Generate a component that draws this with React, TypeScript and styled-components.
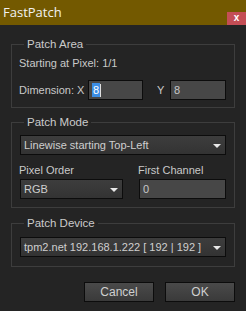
import React from "react";
import styled, { createGlobalStyle } from "styled-components";

const Global = createGlobalStyle`
  html, body {
    margin: 0;
    padding: 0;
    background: #242424;
  }
  body {
    font-family: "Liberation Sans", Arial, sans-serif;
    font-size: 11px;
    color: #c9c9c9;
  }
`;

const Window = styled.div`
  width: 246px;
  height: 311px;
  background: #242424;
  display: flex;
  flex-direction: column;
  overflow: hidden;
`;

const TitleBar = styled.div`
  height: 25px;
  background: #735900;
  display: flex;
  align-items: flex-start;
  justify-content: space-between;
`;

const Title = styled.span`
  color: #f2f2f2;
  font-family: "Open Sans", "Liberation Sans", sans-serif;
  font-size: 13px;
  line-height: 13px;
  margin: 6px 0 0 3px;
`;

const CloseBtn = styled.div`
  width: 19px;
  height: 13px;
  margin-top: 12px;
  background: #c44e55;
  color: #fff;
  font-size: 10px;
  font-weight: bold;
  line-height: 12px;
  text-align: center;
`;

const Body = styled.div`
  display: flex;
  flex-direction: column;
  padding: 12px 11px 0 11px;
`;

const Group = styled.fieldset<{ $gap: number; $pt: number; $pb: number }>`
  margin: 0 0 ${p => p.$gap}px 0;
  padding: ${p => p.$pt}px 8px ${p => p.$pb}px 8px;
  border: 1px solid #3d3d3d;
  min-width: 0;
`;

const Legend = styled.legend`
  padding: 0 3px;
  margin-left: 4px;
  line-height: 14px;
  font-size: 11.5px;
  color: #cbcbcb;
`;

const Line = styled.div`
  line-height: 14px;
  margin-left: -1px;
  white-space: nowrap;
`;

const DimRow = styled.div`
  display: flex;
  align-items: center;
  margin-top: 10px;
  height: 20px;
`;

const RowLabel = styled.span<{ $w: number; $ml?: number }>`
  width: ${p => p.$w}px;
  margin-left: ${p => p.$ml ?? -1}px;
  white-space: nowrap;
`;

const Input = styled.div<{ $w?: number }>`
  box-sizing: border-box;
  height: 20px;
  width: ${p => (p.$w ? `${p.$w}px` : "auto")};
  background: #474747;
  border: 1px solid #0c0c0c;
  display: flex;
  align-items: center;
  padding-left: 3px;
  color: #c8c8c8;
`;

const Selected = styled.span`
  background: #3b8ee6;
  color: #fff;
  padding: 0 1px;
  line-height: 14px;
`;

const Caret = styled.span`
  width: 1px;
  height: 13px;
  background: #e0e0e0;
`;

const Combo = styled.div<{ $w?: number }>`
  box-sizing: border-box;
  height: 20px;
  width: ${p => (p.$w ? `${p.$w}px` : "auto")};
  background: linear-gradient(#3d3d3d, #333333);
  border: 1px solid #0c0c0c;
  display: flex;
  align-items: center;
  justify-content: space-between;
  padding: 0 4px 0 3px;
  color: #cfcfcf;
  white-space: nowrap;
`;

const Arrow = styled.span`
  width: 0;
  height: 0;
  border-left: 4px solid transparent;
  border-right: 4px solid transparent;
  border-top: 4px solid #e8e8e8;
  margin-top: 1px;
`;

const Grid = styled.div`
  display: grid;
  grid-template-columns: 103px 1fr;
  column-gap: 16px;
  row-gap: 2px;
  margin-top: 8px;
`;

const Buttons = styled.div`
  display: flex;
  justify-content: flex-end;
  gap: 11px;
  margin-top: 0;
`;

const Button = styled.div`
  box-sizing: border-box;
  width: 70px;
  height: 20px;
  border: 1px solid #0c0c0c;
  background: linear-gradient(#4a4a4a, #3a3a3a);
  color: #d0d0d0;
  font-size: 12px;
  display: flex;
  align-items: center;
  justify-content: center;
`;

export default function App() {
  return (
    <Window>
      <Global />
      <TitleBar>
        <Title>FastPatch</Title>
        <CloseBtn>x</CloseBtn>
      </TitleBar>
      <Body>
        <Group $gap={7} $pt={5} $pb={7}>
          <Legend>Patch Area</Legend>
          <Line>Starting at Pixel: 1/1</Line>
          <DimRow>
            <RowLabel $w={69}>Dimension: X</RowLabel>
            <Input $w={55}>
              <Selected>8</Selected>
              <Caret />
            </Input>
            <RowLabel $w={13} $ml={14}>Y</RowLabel>
            <Input $w={56}>8</Input>
          </DimRow>
        </Group>
        <Group $gap={8} $pt={6} $pb={8}>
          <Legend>Patch Mode</Legend>
          <Combo>
            Linewise starting Top-Left
            <Arrow />
          </Combo>
          <Grid>
            <Line>Pixel Order</Line>
            <Line>First Channel</Line>
            <Combo>
              RGB
              <Arrow />
            </Combo>
            <Input>0</Input>
          </Grid>
        </Group>
        <Group $gap={15} $pt={7} $pb={9}>
          <Legend>Patch Device</Legend>
          <Combo>
            tpm2.net 192.168.1.222 [ 192 | 192 ]
            <Arrow />
          </Combo>
        </Group>
        <Buttons>
          <Button>Cancel</Button>
          <Button>OK</Button>
        </Buttons>
      </Body>
    </Window>
  );
}
